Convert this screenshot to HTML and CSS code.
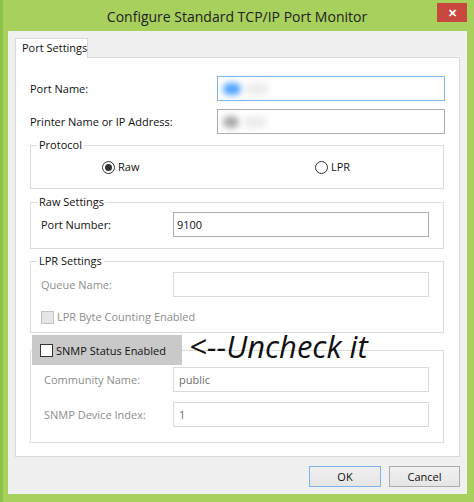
FILE: index.html
```html
<!DOCTYPE html>
<html lang="en">
  <head>
    <meta charset="UTF-8" />
    <meta name="viewport" content="width=device-width, initial-scale=1.0" />
    <title>Configure Standard TCP/IP Port Monitor</title>
    <link rel="stylesheet" href="styles.css">
  </head>
  <body class="body">
    <div class="window">
      <div class="titlebar">
        <span></span>
        <span class="title">Configure Standard TCP/IP Port Monitor</span>
        <span class="close">&#x2715;</span>
      </div>
      <div class="client">
        <div class="tabs">
          <span class="tab">Port Settings</span>
        </div>
        <div class="panel">
          <div class="row top first">
            <label class="label">Port Name:</label>
            <div class="field wide focus"><span class="smudge blue"></span><span class="smudge faint"></span></div>
          </div>
          <div class="row top second">
            <label class="label">Printer Name or IP Address:</label>
            <div class="field wide"><span class="smudge grey"></span><span class="smudge faint"></span></div>
          </div>

          <fieldset class="group protocol">
            <legend class="legend">Protocol</legend>
            <div class="radios">
              <span class="opt raw"><span class="radio checked"></span>Raw</span>
              <span class="opt"><span class="radio"></span>LPR</span>
            </div>
          </fieldset>

          <fieldset class="group raw-set">
            <legend class="legend">Raw Settings</legend>
            <div class="row">
              <label class="label">Port Number:</label>
              <div class="field">9100</div>
            </div>
          </fieldset>

          <fieldset class="group lpr-set">
            <legend class="legend">LPR Settings</legend>
            <div class="row">
              <label class="label off">Queue Name:</label>
              <div class="field off"></div>
            </div>
            <div class="check-row off">
              <span class="box off"></span>LPR Byte Counting Enabled
            </div>
          </fieldset>

          <fieldset class="group snmp">
            <legend class="snmp-legend"><span class="box"></span>SNMP Status Enabled</legend>
            <span class="note">&lt;--Uncheck it</span>
            <div class="row">
              <label class="label off">Community Name:</label>
              <div class="field off val">public</div>
            </div>
            <div class="row second">
              <label class="label off">SNMP Device Index:</label>
              <div class="field off val">1</div>
            </div>
          </fieldset>
        </div>
        <div class="buttons">
          <button class="btn default">OK</button>
          <button class="btn">Cancel</button>
        </div>
      </div>
    </div>
  </body>
</html>
```

FILE: styles.css
```css
.body {
  margin: 0;
  width: 474px;
  height: 502px;
  background-color: #a8d05d;
  box-shadow: inset 3px 0 #8cc247;
  font-family: "Open Sans", "Noto Sans", sans-serif;
  font-size: 11px;
  color: #111;
  overflow: hidden;
}
.window {
  display: flex;
  flex-direction: column;
  height: 502px;
}
.titlebar {
  height: 31px;
  display: grid;
  grid-template-columns: 1fr auto 1fr;
  align-items: start;
}
.title {
  font-size: 14px;
  line-height: 20px;
  margin-top: 7px;
  color: #222;
}
.close {
  justify-self: end;
  margin: 3px 7px 0 0;
  width: 30px;
  height: 19px;
  background-color: #c8473e;
  color: #fff;
  font-size: 11px;
  font-weight: bold;
  line-height: 19px;
  text-align: center;
}
.client {
  flex: 1;
  margin: 0 7px 8px 8px;
  padding: 7px 7px 0 7px;
  background-color: #f0f0f0;
}
.tabs {
  display: flex;
  height: 19px;
}
.tab {
  position: relative;
  z-index: 1;
  width: 73px;
  height: 20px;
  box-sizing: border-box;
  padding-left: 6px;
  border: 1px solid #d9d9d9;
  border-bottom: none;
  background-color: #fff;
  line-height: 18px;
  white-space: nowrap;
  color: #111;
}
.panel {
  box-sizing: border-box;
  height: 400px;
  padding: 0 15px 0 14px;
  border: 1px solid #d9d9d9;
  background-color: #fff;
}
.row {
  display: flex;
  align-items: center;
}
.row.top {
  margin-right: -1px;
}
.row.first {
  margin-top: 18px;
}
.row.second {
  margin-top: 8px;
}
.row.top .label {
  width: 187px;
}
.label {
  line-height: 16px;
  color: #111;
}
.label.off {
  color: #8e8e8e;
}
.field {
  box-sizing: border-box;
  width: 256px;
  height: 25px;
  margin-left: auto;
  padding-left: 3px;
  border: 1px solid #abadb3;
  background-color: #fff;
  line-height: 23px;
  color: #111;
  display: flex;
  align-items: center;
  gap: 4px;
}
.field.wide {
  width: 228px;
  padding-left: 5px;
}
.field.focus {
  border-color: #7eb4ea;
}
.field.off {
  border-color: #dadada;
}
.field.val {
  padding-left: 5px;
  color: #6d6d6d;
}
.smudge {
  display: inline-block;
  height: 12px;
  border-radius: 6px;
  filter: blur(3px);
}
.smudge.blue {
  width: 18px;
  background-color: #4ea2ff;
}
.smudge.grey {
  width: 16px;
  background-color: #a9a9a9;
}
.smudge.faint {
  width: 24px;
  background-color: #ececec;
}
.group {
  margin: 0;
  padding: 0 14px 0 6px;
  border: 1px solid #dcdcdc;
  min-width: 0;
}
.legend {
  padding: 0 2px;
  line-height: 16px;
  color: #111;
}
.group .row {
  padding-left: 4px;
}
.protocol {
  margin-top: 3px;
  padding-top: 6px;
  padding-bottom: 13px;
}
.radios {
  display: flex;
  padding-left: 65px;
  line-height: 16px;
}
.opt {
  display: flex;
  align-items: center;
  gap: 3px;
}
.opt.raw {
  width: 213px;
}
.radio {
  box-sizing: border-box;
  width: 13px;
  height: 13px;
  border: 1px solid #333;
  border-radius: 50%;
  background-color: #fff;
  display: flex;
  align-items: center;
  justify-content: center;
}
.radio.checked::after {
  content: "";
  width: 7px;
  height: 7px;
  border-radius: 50%;
  background-color: #333;
}
.raw-set {
  margin-top: 5px;
  padding-top: 2px;
  padding-bottom: 11px;
}
.lpr-set {
  margin-top: 4px;
  padding-top: 3px;
  padding-bottom: 7px;
}
.check-row {
  display: flex;
  align-items: center;
  gap: 3px;
  margin-top: 12px;
  padding-left: 4px;
  line-height: 16px;
}
.check-row.off {
  color: #8e8e8e;
}
.box {
  box-sizing: border-box;
  width: 13px;
  height: 13px;
  border: 1px solid #333;
  background-color: #fff;
}
.box.off {
  border-color: #c4c4c4;
  background-color: #e6e6e6;
}
.snmp {
  position: relative;
  margin-top: 2px;
  padding: 2px 14px 15px 1px;
}
.snmp .row {
  padding-left: 12px;
}
.snmp .row.second {
  margin-top: 10px;
}
.snmp-legend {
  box-sizing: border-box;
  width: 150px;
  height: 30px;
  padding: 0 0 0 8px;
  display: flex;
  align-items: center;
  gap: 3px;
  background-color: #c9c9c9;
  color: #111;
}
.note {
  position: absolute;
  left: 158px;
  top: -36px;
  font-size: 31px;
  font-style: italic;
  line-height: 34px;
  color: #111;
  white-space: nowrap;
}
.buttons {
  display: flex;
  justify-content: flex-end;
  gap: 8px;
  margin-top: 9px;
}
.btn {
  box-sizing: border-box;
  height: 21px;
  width: 71px;
  padding: 0;
  border: 1px solid #acacac;
  background: linear-gradient(#f0f0f0, #e5e5e5);
  font-family: inherit;
  font-size: 11px;
  color: #111;
}
.btn.default {
  width: 72px;
  border-color: #7eb4ea;
}
```
